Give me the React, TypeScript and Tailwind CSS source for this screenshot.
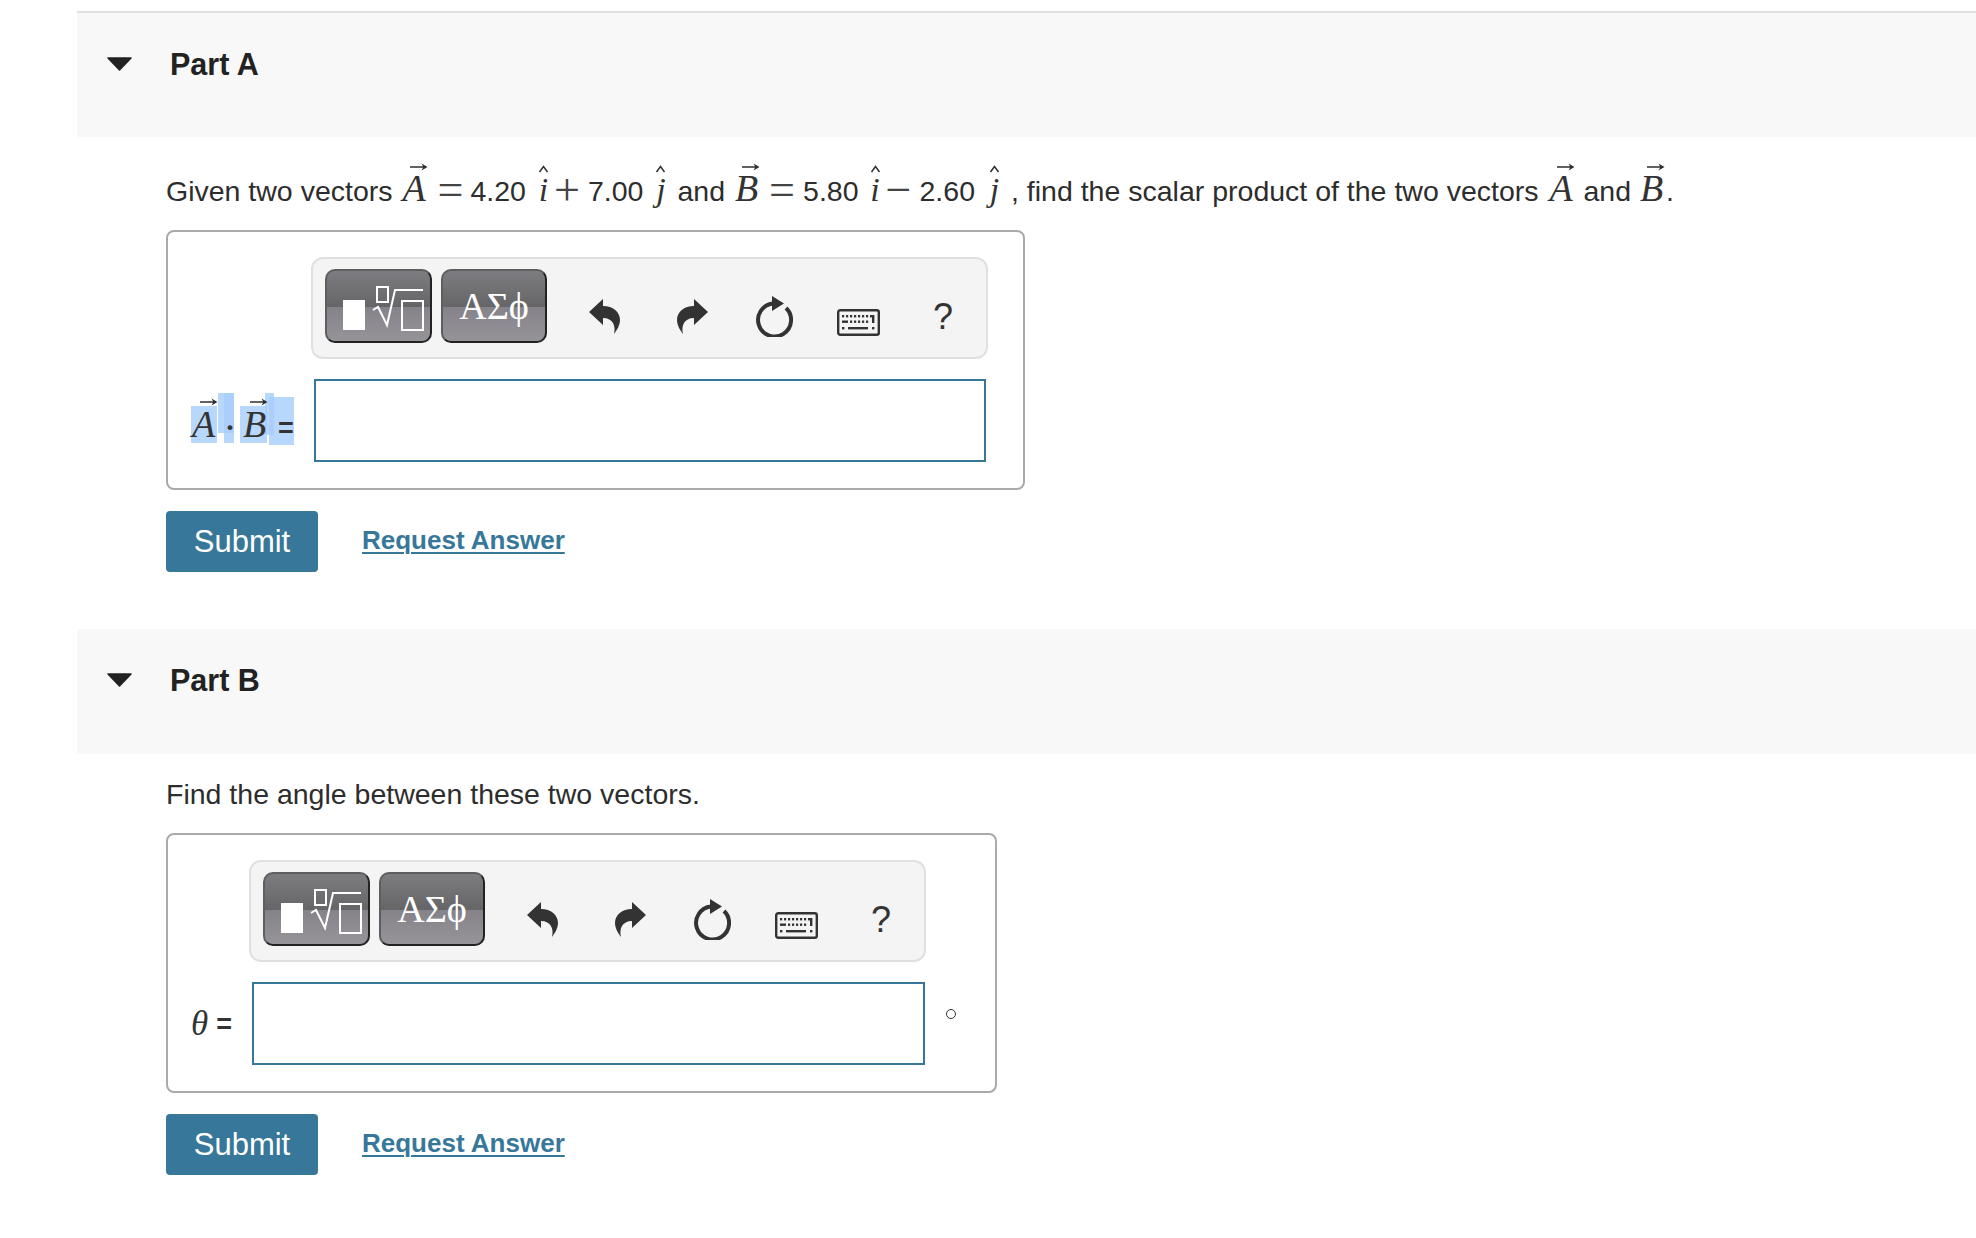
import React from "react";

const SANS = "font-['Liberation_Sans',Arial,sans-serif]";
const SERIF = "font-['Liberation_Serif',serif]";

function Vec({ ch, className = "", arrow = "left-[7px] top-[-7px]" }: { ch: string; className?: string; arrow?: string }) {
  return (
    <span className={`relative inline-block ${SERIF} text-[38px] italic leading-[38px] text-[#333333] ${className}`}>
      {ch}
      <svg className={`absolute ${arrow}`} width="18" height="10" viewBox="0 0 18 10" fill="#2f2f2f">
        <path d="M0 4.2 H13 L11.5 1.5 L17.5 5 L11.5 8.5 L13 5.8 H0 Z" />
      </svg>
    </span>
  );
}

function Hat({ ch, className }: { ch: string; className: string }) {
  return (
    <span className={`relative inline-block ${SERIF} text-center text-[34px] italic leading-[38px] text-[#333333] ${className}`}>
      {ch}
      <svg className="absolute left-[1px] top-[-6px]" width="11" height="8" viewBox="0 0 11 8" fill="none" stroke="#2f2f2f" strokeWidth="1.5">
        <path d="M1.5 7 L5.5 1.5 L9.5 7" />
      </svg>
    </span>
  );
}

function Op({ ch, className = "" }: { ch: string; className?: string }) {
  return <span className={`inline-block translate-y-[4px] text-center ${SERIF} text-[46px] font-light leading-[0] text-[#444444] ${className}`}>{ch}</span>;
}

function MathButton() {
  return (
    <div className="h-[74px] w-[107px] shrink-0 rounded-[10px] border-2 border-[#5e5e60] border-b-[#222222] border-r-[#222222] bg-[linear-gradient(#7d7c80_0%,#656567_52%,#858389_52%,#969499_100%)] pl-[16px] pt-[15px]">
      <svg width="84" height="46" viewBox="0 0 84 46" fill="none" stroke="#ffffff" strokeWidth="2">
        <rect x="0" y="14" width="22" height="30" fill="#ffffff" stroke="none" />
        <rect x="34" y="1" width="11" height="15" />
        <path d="M30 24 L35 21 L44 39 L52 4 H80" />
        <rect x="59" y="15" width="21" height="29" />
      </svg>
    </div>
  );
}

function GreekButton() {
  return (
    <div className={`ml-[9px] flex h-[74px] w-[106px] shrink-0 items-center justify-center rounded-[10px] border-2 border-[#5e5e60] border-b-[#222222] border-r-[#222222] bg-[linear-gradient(#7d7c80_0%,#656567_52%,#858389_52%,#969499_100%)] ${SERIF} text-[38px] leading-none text-white`}>
      ΑΣϕ
    </div>
  );
}

const ARROW = "M0 13 L14 0 V7 C24 7 31 13 31 21 C31 26 28 31 25 35 C27 27 24 19 14 19 V26 Z";

function Keyboard() {
  const row1 = [5, 9, 13, 17, 21, 25, 29, 33];
  const row2 = [13, 17, 21, 25, 29];
  return (
    <svg className="ml-[44px] mt-[40px]" width="43" height="27" viewBox="0 0 43 27" fill="none">
      <rect x="1.2" y="1.2" width="40.6" height="24.6" rx="2" stroke="#333333" strokeWidth="2.4" />
      {row1.map((x) => (
        <rect key={x} x={x} y="6" width="2.2" height="2.4" fill="#333333" />
      ))}
      <rect x="35" y="6" width="2.4" height="8" fill="#333333" />
      <rect x="5" y="11.5" width="6" height="2.4" fill="#333333" />
      {row2.map((x) => (
        <rect key={x} x={x} y="11.5" width="2.2" height="2.4" fill="#333333" />
      ))}
      <rect x="5" y="18" width="2.4" height="2.4" fill="#333333" />
      <rect x="11" y="18" width="20" height="2.4" fill="#333333" />
      <rect x="35" y="18" width="2.4" height="2.4" fill="#333333" />
    </svg>
  );
}

function Toolbar({ className }: { className: string }) {
  return (
    <div className={`flex h-[102px] items-start rounded-[12px] border-2 border-[#e0e0e0] bg-[#f4f4f4] pl-[12px] pt-[10px] ${className}`}>
      <MathButton />
      <GreekButton />
      <svg className="ml-[42px] mt-[30px]" width="31" height="35" viewBox="0 0 31 35" fill="#333333">
        <path d={ARROW} />
      </svg>
      <svg className="ml-[57px] mt-[30px] -scale-x-100" width="31" height="35" viewBox="0 0 31 35" fill="#333333">
        <path d={ARROW} />
      </svg>
      <svg className="ml-[47px] mt-[27px]" width="38" height="41" viewBox="0 0 38 41" fill="none">
        <path d="M31 12 A16.5 16.5 0 1 1 18 7.5" stroke="#333333" strokeWidth="4" />
        <path d="M17 0 L29 7.5 L17 15 Z" fill="#333333" />
      </svg>
      <Keyboard />
      <span className={`ml-[53px] mt-[27px] ${SANS} text-[36px] leading-[42px] text-[#333333]`}>?</span>
    </div>
  );
}

function Actions() {
  return (
    <div className={`mt-[21px] flex items-center ${SANS}`}>
      <button className="h-[61px] w-[152px] rounded-[4px] bg-[#37779a] pt-[1px] text-[31px] text-white">Submit</button>
      <a className="mb-[2px] ml-[44px] text-[26px] font-bold text-[#37779a] underline decoration-2 underline-offset-[3px]">Request Answer</a>
    </div>
  );
}

function PartHeader({ label, className }: { label: string; className: string }) {
  return (
    <div className={`flex items-start bg-[#f8f8f8] pl-[31px] ${className}`}>
      <svg className="ml-[-1px] mt-[44px]" width="25" height="14" viewBox="0 0 25 14" fill="#222222" stroke="#222222" strokeLinejoin="round" strokeWidth="1.5">
        <path d="M1 1 H24 L12.5 13 Z" />
      </svg>
      <h2 className={`ml-[38px] mt-[31px] ${SANS} text-[30.5px] font-bold leading-[40px] text-[#222222]`}>{label}</h2>
    </div>
  );
}

function Highlights() {
  const cls = "absolute bg-[#a6cdfb]/80";
  return (
    <>
      <div className={`${cls} left-[23px] top-[27px] h-[37px] w-[26px]`} />
      <div className={`${cls} left-[50px] top-[14px] h-[40px] w-[16px]`} />
      <div className={`${cls} left-[56px] top-[14px] h-[50px] w-[10px]`} />
      <div className={`${cls} left-[72px] top-[27px] h-[37px] w-[27px]`} />
      <div className={`${cls} left-[97px] top-[14px] h-[42px] w-[9px]`} />
      <div className={`${cls} left-[101px] top-[18px] h-[48px] w-[25px]`} />
    </>
  );
}

export default function App() {
  return (
    <div className={`min-h-[1238px] w-full bg-white pl-[77px] pt-[11px] ${SANS} text-[#2d2d2d]`}>
      <div className="h-[2px] bg-[#e2e2e2]" />
      <PartHeader label="Part A" className="h-[124px]" />

      <div className="pl-[89px]">
        <div className="mt-[32px] flex h-[51px] items-baseline whitespace-nowrap text-[28.5px] leading-[38px]">
          <span>Given two vectors</span>
          <Vec ch="A" className="ml-[10px] w-[25px]" />
          <Op ch="=" className="ml-[10px] w-[26px]" />
          <span className="ml-[7px]">4.20</span>
          <Hat ch="i" className="ml-[11px] w-[13px]" />
          <Op ch="+" className="ml-[4px] w-[26px]" />
          <span className="ml-[8px]">7.00</span>
          <Hat ch="j" className="ml-[11px] w-[13px]" />
          <span className="ml-[10px]">and</span>
          <Vec ch="B" className="ml-[10px] w-[25px]" />
          <Op ch="=" className="ml-[9px] w-[25px]" />
          <span className="ml-[9px]">5.80</span>
          <Hat ch="i" className="ml-[10px] w-[13px]" />
          <Op ch="−" className="ml-[4px] w-[24px]" />
          <span className="ml-[10px]">2.60</span>
          <Hat ch="j" className="ml-[13px] w-[13px]" />
          <span className="ml-[10px]">, find the scalar product of the two vectors</span>
          <Vec ch="A" className="ml-[11px] w-[25px]" />
          <span className="ml-[9px]">and</span>
          <Vec ch="B" className="ml-[9px] w-[26px]" />
          <span>.</span>
        </div>

        <div className="mt-[10px] box-border h-[260px] w-[859px] rounded-[8px] border-2 border-[#aaaaaa] pt-[25px]">
          <Toolbar className="ml-[143px] w-[677px]" />
          <div className="relative mt-[20px] flex items-start pl-[24px]">
            <Highlights />
            <div className="relative mt-[26px] flex h-[40px] w-[122px] items-baseline">
              <Vec ch="A" className="w-[26px]" arrow="left-[8px] top-[-8px]" />
              <span className={`w-[24px] text-center ${SERIF} text-[30px] font-bold leading-[38px] text-[#333333]`}>·</span>
              <Vec ch="B" className="ml-[1px] w-[27px]" arrow="left-[7px] top-[-8px]" />
              <span className={`ml-[8px] ${SANS} text-[27px] font-bold leading-[38px] text-[#333333]`}>=</span>
            </div>
            <div className="h-[83px] w-[672px] border-2 border-[#37779a] bg-white" />
          </div>
        </div>

        <Actions />
      </div>

      <PartHeader label="Part B" className="mt-[57px] h-[125px]" />

      <div className="pl-[89px]">
        <p className="mt-[21px] h-[39px] text-[28.5px] leading-[39px]">Find the angle between these two vectors.</p>

        <div className="mt-[19px] box-border h-[260px] w-[831px] rounded-[8px] border-2 border-[#aaaaaa] pt-[25px]">
          <Toolbar className="ml-[81px] w-[677px]" />
          <div className="mt-[20px] flex items-start pl-[23px]">
            <div className="mt-[21px] flex h-[40px] w-[61px] items-center">
              <span className={`${SERIF} text-[35px] italic leading-none text-[#333333]`}>θ</span>
              <span className="ml-[8px] mt-[3px] text-[27px] font-bold leading-none text-[#333333]">=</span>
            </div>
            <div className="h-[83px] w-[673px] border-2 border-[#37779a] bg-white" />
            <span className="ml-[21px] mt-[27px] h-[10px] w-[10px] rounded-full border-[1.5px] border-[#333333]" aria-label="degrees" />
          </div>
        </div>

        <Actions />
      </div>
    </div>
  );
}
